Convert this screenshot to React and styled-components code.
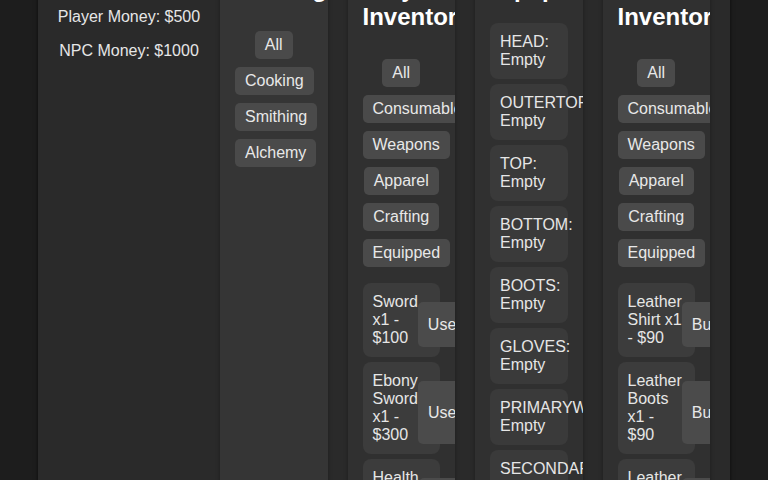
import React from 'react'
import styled, { createGlobalStyle } from 'styled-components'

const GlobalStyle = createGlobalStyle`
  html, body {
    margin: 0;
    height: 100%;
    overflow: hidden;
    background: #1d1d1d;
    font-family: "Liberation Sans", Arial, sans-serif;
    color: #e4e4e4;
  }
`

const craftFilters = ['All', 'Cooking', 'Smithing', 'Alchemy']
const invFilters = ['All', 'Consumables', 'Weapons', 'Apparel', 'Crafting', 'Equipped']

const playerItems = [
  { name: 'Sword', qty: 1, price: 100 },
  { name: 'Ebony Sword', qty: 1, price: 300 },
  { name: 'Health Potion', qty: 3, price: 25 },
]

const npcItems = [
  { name: 'Leather Shirt', qty: 1, price: 90 },
  { name: 'Leather Boots', qty: 1, price: 90 },
  { name: 'Leather Helmet', qty: 1, price: 70 },
]

const slots = ['HEAD', 'OUTERTOP', 'TOP', 'BOTTOM', 'BOOTS', 'GLOVES', 'PRIMARYWEAPON', 'SECONDARYWEAPON']

function Shop() {
  return (
    <Page>
      <InfoPanel>
        <Money>Player Money: $500</Money>
        <Money>NPC Money: $1000</Money>
      </InfoPanel>
      <Columns>
        <Panel $bg="#353535">
          <Heading>Crafting</Heading>
          <FilterBar>
            {craftFilters.map((f) => <FilterButton key={f}>{f}</FilterButton>)}
          </FilterBar>
        </Panel>

        <Panel>
          <Heading>Player Inventory</Heading>
          <FilterBar>
            {invFilters.map((f) => <FilterButton key={f}>{f}</FilterButton>)}
          </FilterBar>
          <ItemList>
            {playerItems.map((it) => (
              <ItemCard key={it.name}>
                <ItemText>{`${it.name} x${it.qty} - $${it.price}`}</ItemText>
                <ActionButton>Use</ActionButton>
              </ItemCard>
            ))}
          </ItemList>
        </Panel>

        <Panel>
          <Heading>Equipment</Heading>
          {slots.map((s) => (
            <Slot key={s}>{s}: Empty</Slot>
          ))}
        </Panel>

        <Panel>
          <Heading>NPC Inventory</Heading>
          <FilterBar>
            {invFilters.map((f) => <FilterButton key={f}>{f}</FilterButton>)}
          </FilterBar>
          <ItemList>
            {npcItems.map((it) => (
              <ItemCard key={it.name}>
                <ItemText>{`${it.name} x${it.qty} - $${it.price}`}</ItemText>
                <ActionButton>Buy</ActionButton>
              </ItemCard>
            ))}
          </ItemList>
        </Panel>
      </Columns>
    </Page>
  )
}

const Page = styled.div`
  box-sizing: border-box;
  width: 692px;
  margin: -45px auto 0;
  padding-right: 20px;
  display: flex;
  background: #2a2a2a;
  box-shadow: 0 0 4px rgba(0, 0, 0, 0.6);
`

const InfoPanel = styled.div`
  width: 182px;
  flex-shrink: 0;
  padding-top: 37px;
  text-align: center;
`

const Money = styled.p`
  margin: 16px 0;
  font-size: 16px;
  color: #e6e6e6;
`

const Columns = styled.div`
  flex: 1;
  display: flex;
  gap: 20px;
  min-width: 0;
`

const Panel = styled.div`
  flex: 1 1 0;
  min-width: 0;
  box-sizing: border-box;
  padding: 20px 15px 15px;
  background: ${(p) => p.$bg || '#303030'};
  overflow: hidden;
  box-shadow: 0 0 4px rgba(0, 0, 0, 0.35);
`

const Heading = styled.h2`
  margin: 0 0 20px;
  font-size: 24px;
  font-weight: bold;
  color: #fff;
  text-align: center;
`

const FilterBar = styled.div`
  padding-top: 8px;
  margin-bottom: 16px;
`

const FilterButton = styled.button`
  display: block;
  margin: 0 auto 8px;
  padding: 5px 10px;
  border: none;
  border-radius: 5px;
  background: #4a4a4a;
  color: #e8e8e8;
  font-family: inherit;
  font-size: 16px;
  white-space: nowrap;

  &:last-child {
    margin-bottom: 0;
  }
`

const ItemList = styled.div`
  display: flex;
  flex-direction: column;
  gap: 5px;
`

const ItemCard = styled.div`
  display: flex;
  padding: 10px;
  border-radius: 8px;
  background: #3c3c3c;
`

const ItemText = styled.div`
  font-size: 16px;
  color: #e6e6e6;
  text-align: left;
`

const ActionButton = styled.button`
  margin-top: 9px;
  padding: 0 10px;
  border: none;
  border-radius: 5px;
  background: #4b4b4b;
  color: #e8e8e8;
  font-family: inherit;
  font-size: 16px;
`

const Slot = styled.div`
  margin-bottom: 5px;
  padding: 10px;
  border-radius: 8px;
  background: #3a3a3a;
  font-size: 16px;
  color: #e6e6e6;
`

export default function App() {
  return (
    <>
      <GlobalStyle />
      <Shop />
    </>
  )
}
